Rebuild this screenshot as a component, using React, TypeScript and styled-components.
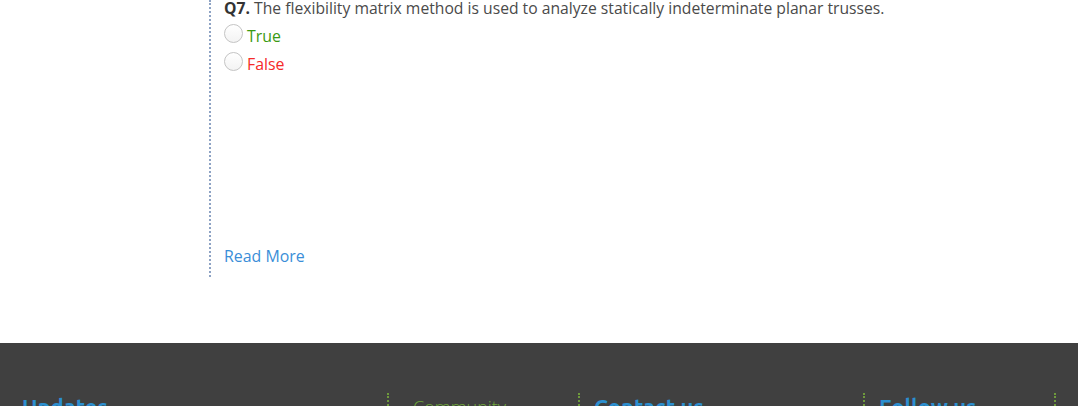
import styled, { createGlobalStyle } from 'styled-components';

const GlobalStyle = createGlobalStyle`
    html, body {
        margin: 0;
        padding: 0;
        background: #ffffff;
        font-family: 'Open Sans', 'Liberation Sans', sans-serif;
    }
`;

const Page = styled.div`
    width: 1078px;
    height: 406px;
    overflow: hidden;
`;

const Main = styled.div`
    display: flex;
    height: 343px;
`;

const Column = styled.div`
    margin-left: 209px;
    width: 860px;
    height: 277px;
    padding-left: 13px;
    border-left: 2px dotted #8ea3c4;
    display: flex;
    flex-direction: column;
`;

const Question = styled.p`
    margin: -2px 0 0;
    font-size: 15.7px;
    line-height: 20px;
    color: #4a4a4a;

    b {
        color: #333333;
        font-weight: 700;
    }
`;

const Options = styled.div`
    display: flex;
    flex-direction: column;
    margin-top: 3px;
`;

const Option = styled.label`
    display: flex;
    align-items: center;
    gap: 4px;
    height: 28px;
    font-size: 15.9px;
`;

const Radio = styled.span`
    width: 17px;
    height: 17px;
    border-radius: 50%;
    border: 1px solid #c4c4c4;
    background: linear-gradient(#ffffff, #f3f3f3);
    margin-top: -4px;
`;

const OptionText = styled.span<{ $tone: 'true' | 'false' }>`
    color: ${p => (p.$tone === 'true' ? '#3a9a12' : '#f52a2a')};
    margin-top: 2px;
`;

const ReadMore = styled.a`
    margin-top: auto;
    margin-bottom: 10px;
    font-size: 15.9px;
    color: #3a8ed8;
    text-decoration: none;
`;

const Footer = styled.footer`
    background: #404040;
    height: 63px;
    display: flex;
    padding-top: 50px;
    box-sizing: border-box;
`;

const FooterCol = styled.div<{ $width: number; $pad: number; $sep?: boolean }>`
    width: ${p => p.$width}px;
    padding-left: ${p => p.$pad}px;
    box-sizing: border-box;
    border-left: ${p => (p.$sep ? '2px dotted #6e9a3c' : 'none')};
    height: 40px;
`;

const Heading = styled.h3`
    margin: 0;
    font-family: 'Ubuntu', 'Open Sans', 'Liberation Sans', sans-serif;
    font-weight: 700;
    font-size: 22px;
    line-height: 28px;
    color: #2b8fd0;
`;

const Sub = styled.h4`
    margin: 2px 0 0;
    font-weight: 300;
    font-size: 18px;
    line-height: 24px;
    color: #6fa83a;
`;

const EndRule = styled.div`
    width: 2px;
    height: 40px;
    border-left: 2px dotted #6e9a3c;
`;

export default function App() {
    return (
        <Page>
            <GlobalStyle />
            <Main>
                <Column>
                    <Question>
                        <b>Q7.</b> The flexibility matrix method is used to analyze statically indeterminate planar trusses.
                    </Question>
                    <Options>
                        <Option>
                            <Radio />
                            <OptionText $tone="true">True</OptionText>
                        </Option>
                        <Option>
                            <Radio />
                            <OptionText $tone="false">False</OptionText>
                        </Option>
                    </Options>
                    <ReadMore href="#">Read More</ReadMore>
                </Column>
            </Main>
            <Footer>
                <FooterCol $width={387} $pad={22}>
                    <Heading>Updates</Heading>
                </FooterCol>
                <FooterCol $width={191} $pad={24} $sep>
                    <Sub>Community</Sub>
                </FooterCol>
                <FooterCol $width={285} $pad={14} $sep>
                    <Heading>Contact us</Heading>
                </FooterCol>
                <FooterCol $width={191} $pad={14} $sep>
                    <Heading>Follow us</Heading>
                </FooterCol>
                <EndRule />
            </Footer>
        </Page>
    );
}
